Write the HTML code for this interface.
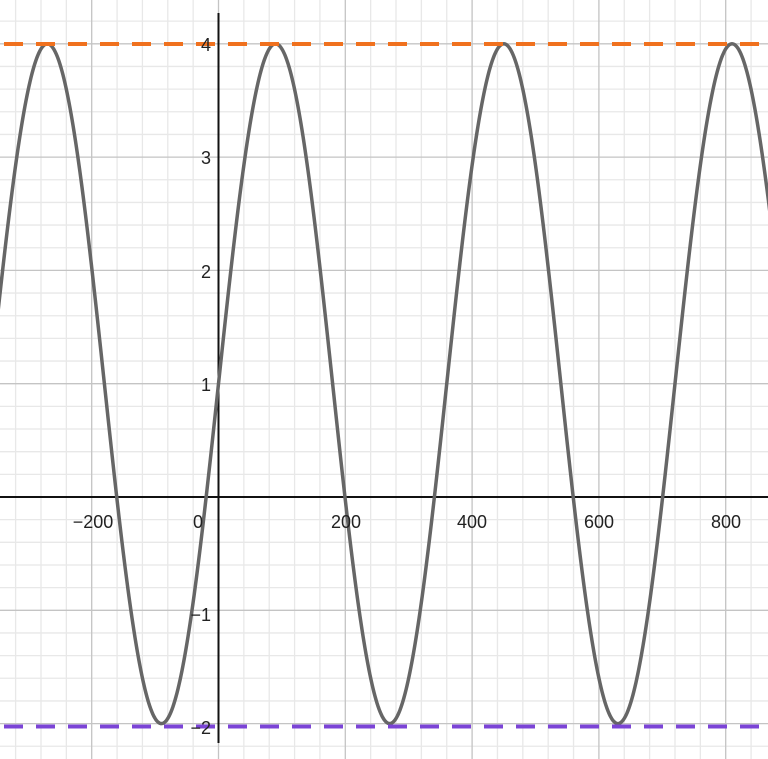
<!DOCTYPE html>
<html><head><meta charset="utf-8"><style>
html,body{margin:0;padding:0;background:#fff;width:768px;height:759px;overflow:hidden;}
svg{display:block;}
text{font-family:"Liberation Sans",sans-serif;font-size:18px;fill:#222;}
</style></head><body>
<svg id="s" width="768" height="759" viewBox="0 0 768 759">
<g id="grid"></g>
<line x1="218.5" y1="13" x2="218.5" y2="743" stroke="#111" stroke-width="2"/>
<line x1="0" y1="497" x2="768" y2="497" stroke="#111" stroke-width="2"/>
<path id="curve" fill="none" stroke="#666" stroke-width="3.5"/>
<line x1="0" y1="44" x2="768" y2="44" stroke="#f0711e" stroke-width="4" stroke-dasharray="19,13" stroke-dashoffset="-4"/>
<line x1="0" y1="726.5" x2="768" y2="726.5" stroke="#7b44d6" stroke-width="4" stroke-dasharray="19,13" stroke-dashoffset="-4"/>
<g text-anchor="middle">
<text x="93" y="528">−200</text>
<text x="198" y="528">0</text>
<text x="346" y="528">200</text>
<text x="472" y="528">400</text>
<text x="599" y="528">600</text>
<text x="726" y="528">800</text>
</g>
<g text-anchor="end">
<text x="211" y="51">4</text>
<text x="211" y="164">3</text>
<text x="211" y="278">2</text>
<text x="211" y="391">1</text>
<text x="211" y="621">−1</text>
<text x="211" y="734">−2</text>
</g>
</svg>
<script>
var ox=218.5,oy=497,sx=0.634,sy=113.3,ns="http://www.w3.org/2000/svg",g=document.getElementById('grid');
function L(x1,y1,x2,y2,c){var l=document.createElementNS(ns,'line');l.setAttribute('x1',x1);l.setAttribute('y1',y1);l.setAttribute('x2',x2);l.setAttribute('y2',y2);l.setAttribute('stroke',c);l.setAttribute('stroke-width',1.3);g.appendChild(l);}
for(var u=-400;u<=1000;u+=40){var x=ox+u*sx;var maj=(u%200===0);if(!maj)L(x,0,x,759,'#e8e8e8');}
for(var v=-3;v<=5;v+=0.2){var y=oy-v*sy;var r=Math.round(v*5);if(r%5!==0)L(0,y,768,y,'#e8e8e8');}
for(var u=-400;u<=1000;u+=200){var x=ox+u*sx;L(x,0,x,759,'#c4c4c4');}
for(var v=-3;v<=5;v++){var y=oy-v*sy;L(0,y,768,y,'#c4c4c4');}
var d='';for(var px=-2;px<=770;px+=1){var u=(px-ox)/sx;var y=oy-(1+3*Math.sin(u*Math.PI/180))*sy;d+=(px===-2?'M':'L')+px+' '+y.toFixed(2);}
document.getElementById('curve').setAttribute('d',d);
</script>
</body></html>
